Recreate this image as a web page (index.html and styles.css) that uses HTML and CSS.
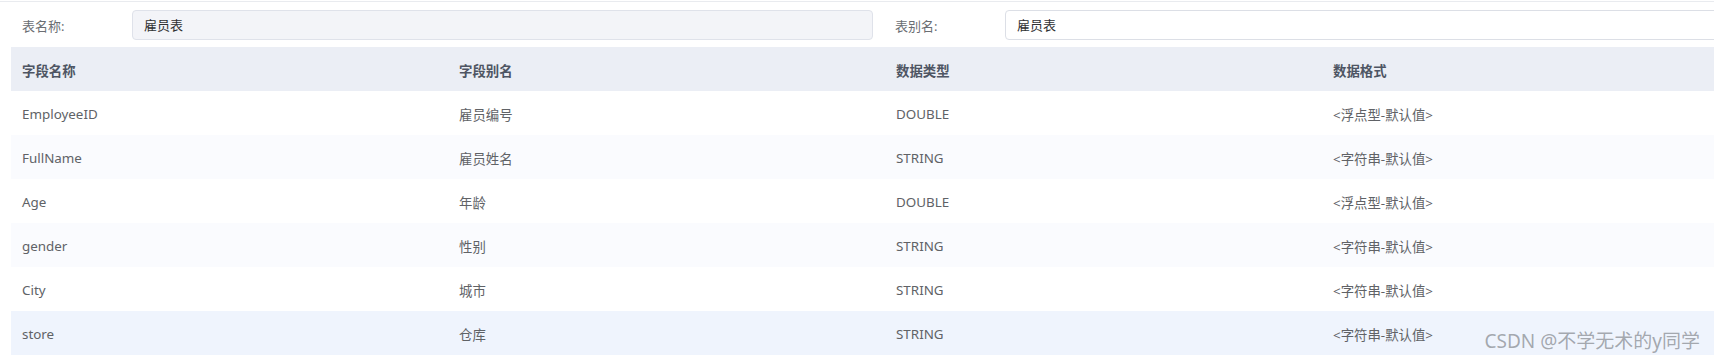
FILE: index.html
```html
<!DOCTYPE html>
<html lang="zh-CN">
<head>
<meta charset="utf-8">
<title>表结构</title>
<link rel="stylesheet" href="styles.css">
</head>
<body>
<div class="page">
  <div class="form">
    <div class="form-item">
      <label class="form-label">表名称:</label>
      <div class="input input-disabled">雇员表</div>
    </div>
    <div class="form-item">
      <label class="form-label">表别名:</label>
      <div class="input">雇员表</div>
    </div>
  </div>
  <div class="table">
    <div class="row head">
      <div class="cell">字段名称</div>
      <div class="cell">字段别名</div>
      <div class="cell">数据类型</div>
      <div class="cell">数据格式</div>
    </div>
    <div class="row">
      <div class="cell">EmployeeID</div>
      <div class="cell">雇员编号</div>
      <div class="cell">DOUBLE</div>
      <div class="cell">&lt;浮点型-默认值&gt;</div>
    </div>
    <div class="row stripe">
      <div class="cell">FullName</div>
      <div class="cell">雇员姓名</div>
      <div class="cell">STRING</div>
      <div class="cell">&lt;字符串-默认值&gt;</div>
    </div>
    <div class="row">
      <div class="cell">Age</div>
      <div class="cell">年龄</div>
      <div class="cell">DOUBLE</div>
      <div class="cell">&lt;浮点型-默认值&gt;</div>
    </div>
    <div class="row stripe">
      <div class="cell">gender</div>
      <div class="cell">性别</div>
      <div class="cell">STRING</div>
      <div class="cell">&lt;字符串-默认值&gt;</div>
    </div>
    <div class="row">
      <div class="cell">City</div>
      <div class="cell">城市</div>
      <div class="cell">STRING</div>
      <div class="cell">&lt;字符串-默认值&gt;</div>
    </div>
    <div class="row hover">
      <div class="cell">store</div>
      <div class="cell">仓库</div>
      <div class="cell">STRING</div>
      <div class="cell">&lt;字符串-默认值&gt;</div>
    </div>
  </div>
  <div class="watermark">CSDN @不学无术的y同学</div>
</div>
</body>
</html>
```

FILE: styles.css
```css
html, body {
  margin: 0;
  padding: 0;
  background: #ffffff;
}
body {
  width: 1714px;
  height: 361px;
  overflow: hidden;
  font-family: "Noto Sans", "Noto Sans CJK SC", sans-serif;
  font-size: 13px;
  color: #606266;
}
.page {
  position: relative;
  height: 361px;
  padding-top: 1px;
  box-sizing: border-box;
}
.form {
  display: flex;
  border-top: 1px solid #e9ebef;
  padding-top: 8px;
  height: 46px;
  box-sizing: border-box;
}
.form-item {
  flex: 0 0 873px;
  display: flex;
  align-items: center;
  height: 30px;
}
.form-label {
  flex: 0 0 132px;
  box-sizing: border-box;
  padding-left: 22px;
  color: #6b6e73;
  font-size: 13px;
}
.input {
  flex: 1;
  height: 30px;
  box-sizing: border-box;
  border: 1px solid #dcdfe6;
  border-radius: 4px;
  background: #ffffff;
  padding-left: 11px;
  line-height: 28px;
  color: #303133;
  font-size: 13px;
  min-width: 741px;
}
.input-disabled {
  background: #f3f4f8;
  border-color: #dfe2ea;
}
.table {
  margin-left: 11px;
  width: 1748px;
}
.row {
  display: grid;
  grid-template-columns: repeat(4, 437px);
  height: 44px;
  align-items: center;
  background: #ffffff;
  font-size: 13.4px;
}
.row.head {
  background: #ebeef5;
  color: #4e5563;
  font-weight: 700;
}
.row.stripe {
  background: #fafbfe;
}
.row.hover {
  background: #eff4fd;
}
.cell {
  padding-left: 11px;
  padding-top: 1px;
  white-space: nowrap;
}
.watermark {
  position: absolute;
  right: 14px;
  bottom: 9px;
  font-size: 19px;
  color: rgba(130, 134, 140, 0.7);
  font-family: "Noto Sans", "Noto Sans CJK SC", sans-serif;
  line-height: 22px;
}
```
